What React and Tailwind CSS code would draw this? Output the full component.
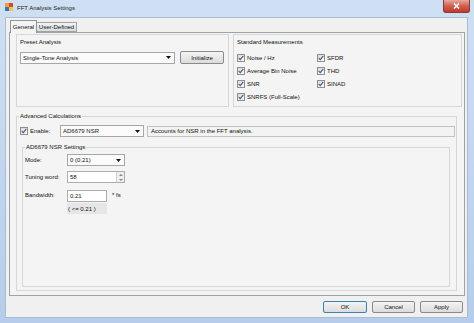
import React from 'react';

const Check = () => (
  <span className="w-[8px] h-[8px] shrink-0 border border-[#8e8f8f] bg-gradient-to-br from-[#d8d8d8] to-[#fbfbfb] flex items-center justify-center">
    <svg width="6" height="6" viewBox="0 0 6 6">
      <path d="M0.7 3.1 L2.3 4.7 L5.3 0.9" stroke="#4a5e86" strokeWidth="1.2" fill="none" />
    </svg>
  </span>
);

const Arrow = () => (
  <svg width="5" height="3" viewBox="0 0 5 3" className="shrink-0">
    <path d="M0 0 H5 L2.5 3 Z" fill="#111" />
  </svg>
);

const Combo = ({ text, className }) => (
  <div className={`flex items-center justify-between border border-[#a7a7a7] bg-[#fbfbfb] pl-[2px] pr-[3px] ${className}`}>
    <span>{text}</span>
    <Arrow />
  </div>
);

const Button = ({ label, focused }) => (
  <div
    className={`h-[12px] flex items-center justify-center rounded-[2px] border bg-gradient-to-b from-[#f4f4f4] to-[#dcdcdc] ${
      focused ? 'w-[44px] border-[#3c7fb1]' : 'w-[43px] border-[#8a8a8a]'
    }`}
  >
    {label}
  </div>
);

const Measure = ({ label }) => (
  <div className="flex items-center gap-[2px]">
    <Check />
    <span>{label}</span>
  </div>
);

export default function App() {
  return (
    <div className="w-[474px] h-[323px] overflow-hidden flex flex-col bg-gradient-to-b from-[#cfe0f3] to-[#b5cdea] font-['Liberation_Sans',Arial,sans-serif] text-[6px] leading-[8px] text-[#111]">
      {/* title bar */}
      <div className="h-[17px] flex items-start shrink-0">
        <svg width="8" height="8" viewBox="0 0 8 8" className="ml-[5px] mt-[3px]">
          <rect x="0" y="0" width="4" height="4" fill="#e8a33a" />
          <rect x="4" y="0" width="4" height="4" fill="#d9472b" />
          <rect x="0" y="4" width="4" height="4" fill="#3b73c4" />
          <rect x="4" y="4" width="4" height="4" fill="#f1c94a" />
        </svg>
        <span className="ml-[4px] mt-[4px] text-[#1a1a1a]">FFT Analysis Settings</span>
        <div className="ml-auto mr-[4px] w-[27px] h-[13px] rounded-b-[3px] border border-t-0 border-[#8a3a32] bg-gradient-to-b from-[#e8a89c] via-[#cf5e50] to-[#c0392b] flex items-center justify-center">
          <svg width="7" height="6" viewBox="0 0 7 6">
            <path d="M1 0.5 L6 5.5 M6 0.5 L1 5.5" stroke="#fff" strokeWidth="1.5" />
          </svg>
        </div>
      </div>

      {/* client area */}
      <div className="ml-[5px] w-[463px] h-[301px] shrink-0 bg-[#f0f0f0] border border-[#a9bcd2] flex flex-col">
        {/* tabs */}
        <div className="mt-[2px] ml-[4px] h-[12px] flex items-end">
          <div className="relative z-10 -mb-px w-[27px] h-[13px] border border-b-0 border-[#8f939b] bg-[#f4f4f4] flex items-center justify-center">
            General
          </div>
          <div className="w-[40px] h-[10px] border border-l-0 border-[#a0a3aa] bg-gradient-to-b from-[#f2f2f2] to-[#dddddd] flex items-center justify-center">
            User-Defined
          </div>
        </div>

        {/* tab page */}
        <div className="ml-[3px] w-[456px] h-[264px] border border-[#9da1a8] bg-[#f4f4f4] flex flex-col">
          <div className="mt-[1px] ml-[6px] flex gap-[4px]">
            <div className="w-[213px] h-[73px] border border-[#d7d7d7] pl-[3px] pt-[3px] flex flex-col">
              <span>Preset Analysis</span>
              <div className="mt-[5px] flex items-center">
                <Combo text="Single-Tone Analysis" className="w-[155px] h-[12px]" />
                <div className="ml-[5px] w-[44px] h-[13px] rounded-[2px] border border-[#8a8a8a] bg-gradient-to-b from-[#f4f4f4] to-[#dcdcdc] flex items-center justify-center">
                  Initialize
                </div>
              </div>
            </div>
            <div className="w-[229px] h-[73px] border border-[#d7d7d7] pl-[3px] pt-[3px] flex flex-col">
              <span>Standard Measurements</span>
              <div className="mt-[5px] grid grid-flow-col grid-rows-[13px_13px_13px_13px] grid-cols-[80px_80px]">
                <Measure label="Noise / Hz" />
                <Measure label="Average Bin Noise" />
                <Measure label="SNR" />
                <Measure label="SNRFS (Full-Scale)" />
                <Measure label="SFDR" />
                <Measure label="THD" />
                <Measure label="SINAD" />
              </div>
            </div>
          </div>

          <fieldset className="mt-[5px] ml-[6px] w-[441px] h-[179px] border border-[#d7d7d7]">
            <legend className="ml-[2px] px-[1px] leading-[8px]">Advanced Calculations</legend>
            <div className="mt-[5px] pl-[3px] flex items-center">
              <div className="w-[40px] flex items-center gap-[2px]">
                <Check />
                <span>Enable:</span>
              </div>
              <Combo text="AD6679 NSR" className="w-[84px] h-[12px]" />
              <div className="ml-[3px] w-[308px] h-[11px] border border-[#c2c2c2] bg-[#f3f3f3] pl-[3px] flex items-center">
                Accounts for NSR in the FFT analysis.
              </div>
            </div>

            <fieldset className="mt-[6px] ml-[5px] w-[428px] h-[144px] border border-[#d7d7d7]">
              <legend className="ml-[2px] px-[1px] leading-[8px]">AD6679 NSR Settings</legend>
              <div className="mt-[3px] pl-[2px] flex flex-col">
                <div className="flex items-center">
                  <span className="w-[42px]">Mode:</span>
                  <Combo text="0 (0.21)" className="w-[58px] h-[12px]" />
                </div>
                <div className="mt-[5px] flex items-center">
                  <span className="w-[42px]">Tuning word:</span>
                  <div className="w-[58px] h-[12px] border border-[#abadb3] bg-white flex items-center justify-between pl-[2px]">
                    <span>58</span>
                    <div className="w-[8px] h-full flex flex-col border-l border-[#cfcfcf] bg-[#eeeeee]">
                      <div className="flex-1 flex items-center justify-center">
                        <svg width="4" height="2" viewBox="0 0 4 2"><path d="M0 2 L2 0 L4 2 Z" fill="#8a8a8a" /></svg>
                      </div>
                      <div className="flex-1 flex items-center justify-center">
                        <svg width="4" height="2" viewBox="0 0 4 2"><path d="M0 0 L4 0 L2 2 Z" fill="#8a8a8a" /></svg>
                      </div>
                    </div>
                  </div>
                </div>
                <div className="mt-[7px] flex items-start">
                  <span className="w-[42px] mt-[1px]">Bandwidth:</span>
                  <div className="w-[40px] h-[12px] border border-[#abadb3] bg-white pl-[2px] flex items-center">0.21</div>
                  <span className="ml-[5px] mt-[1px]">* fs</span>
                </div>
                <div className="mt-[1px] ml-[42px] w-[40px] h-[11px] bg-[#e6e6e6] pl-[1px] flex items-center">
                  ( &lt;= 0.21 )
                </div>
              </div>
            </fieldset>
          </fieldset>
        </div>

        {/* dialog buttons */}
        <div className="mt-[5px] pr-[4px] flex justify-end gap-[5px]">
          <Button label="OK" focused />
          <Button label="Cancel" />
          <Button label="Apply" />
        </div>
      </div>
    </div>
  );
}
